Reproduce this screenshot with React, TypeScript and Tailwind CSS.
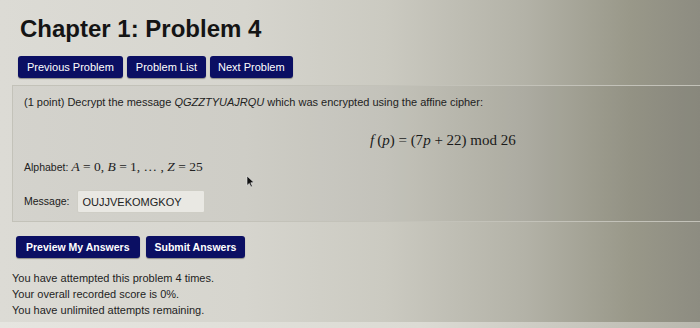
import React from "react";

const btn =
  "h-[22px] rounded-[3px] bg-[#0b0f63] text-white leading-[22px] shadow-[0_1px_1px_rgba(0,0,0,0.35)] flex items-center";

export default function App() {
  return (
    <div className="relative w-[700px] h-[328px] overflow-hidden bg-[linear-gradient(to_right,#dcdbd5_0%,#d6d5ce_35%,#cbcac1_55%,#b3b2a7_75%,#999889_90%,#8d8c81_100%)] font-['Liberation_Sans',Arial,sans-serif] text-[#1c1c1c]">
      <div className="pt-[15px] pl-[20px]">
        <h1 className="text-[24px] leading-[28px] font-bold text-[#141414]">Chapter 1: Problem 4</h1>
      </div>
      <div className="flex gap-[4px] pl-[18px] mt-[13px]">
        <div className={btn + " text-[11px] px-[9px]"}>Previous Problem</div>
        <div className={btn + " text-[11px] px-[9px]"}>Problem List</div>
        <div className={btn + " text-[11px] px-[8px]"}>Next Problem</div>
      </div>

      <div className="ml-[12px] mt-[7px] h-[137px] border-l border-t border-b border-[#c3c2b9] bg-[rgba(0,0,0,0.035)] pl-[11px] pt-[9px]">
        <p className="text-[11px] leading-[14px] text-[#222]">
          (1 point) Decrypt the message <i>QGZZTYUAJRQU</i> which was encrypted using the affine cipher:
        </p>
        <div className="mt-[22px] pl-[346px] font-['Liberation_Serif','Times_New_Roman',serif] text-[15px] leading-[18px] text-[#1a1a1a]">
          <i>f</i>&thinsp;(<i>p</i>) = (7<i>p</i> + 22) mod 26
        </div>
        <div className="mt-[8px] flex items-baseline text-[10.5px] text-[#222]">
          <span>Alphabet:</span>
          <span className="ml-[3px] font-['Liberation_Serif','Times_New_Roman',serif] text-[13.5px]">
            <i>A</i> = 0, <i>B</i> = 1, … , <i>Z</i> = 25
          </span>
        </div>
        <div className="mt-[13px] flex items-center">
          <span className="text-[10.5px] text-[#1a1a1a]">Message:</span>
          <div className="ml-[7px] w-[128px] h-[23px] bg-[#e9e8e3] border border-[#cfcec6] rounded-[2px] flex items-center pl-[5px] text-[11px] text-[#222]">
            OUJJVEKOMGKOY
          </div>
        </div>
      </div>

      <div className="flex gap-[6px] pl-[16px] mt-[14px]">
        <div className={btn + " text-[10.5px] px-[10px] font-bold"}>Preview My Answers</div>
        <div className={btn + " text-[10.5px] px-[9px] font-bold"}>Submit Answers</div>
      </div>

      <div className="pl-[12px] mt-[12px] text-[11px] leading-[16px] text-[#1e1e1e]">
        <p>You have attempted this problem 4 times.</p>
        <p>Your overall recorded score is 0%.</p>
        <p>You have unlimited attempts remaining.</p>
      </div>

      <div className="absolute left-0 right-0 bottom-0 h-[6px] bg-[linear-gradient(to_right,#e6e5e0,#dcdbd4_60%,#b9b8ae)]" />

      <svg className="absolute left-[246px] top-[175px]" width="9" height="13" viewBox="0 0 9 13">
        <path d="M1 1 L1 10.5 L3.3 8.4 L5 12 L6.4 11.3 L4.8 7.8 L8 7.6 Z" fill="#111" stroke="#eee" strokeWidth="0.6" />
      </svg>
    </div>
  );
}
